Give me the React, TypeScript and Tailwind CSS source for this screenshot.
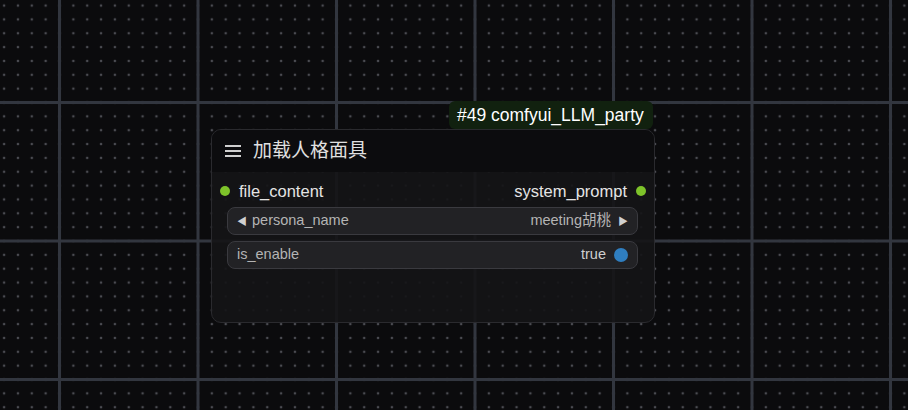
import type { ReactNode } from 'react'

const font = { fontFamily: '"Liberation Sans", Arial, "Noto Sans CJK SC", sans-serif' }

function CanvasGrid() {
  return (
    <svg className="absolute inset-0 h-full w-full" width="908" height="410">
      <defs>
        <pattern id="dots" patternUnits="userSpaceOnUse" width="13.85" height="13.85" x="59.5" y="102.5">
          <circle cx="0" cy="0" r="1.3" fill="#4b4c52" />
          <circle cx="13.85" cy="0" r="1.3" fill="#4b4c52" />
          <circle cx="0" cy="13.85" r="1.3" fill="#4b4c52" />
          <circle cx="13.85" cy="13.85" r="1.3" fill="#4b4c52" />
        </pattern>
        <pattern id="lines" patternUnits="userSpaceOnUse" width="138.5" height="138.5" x="58" y="101">
          <rect x="0" y="0" width="3" height="138.5" fill="#32363f" />
          <rect x="0" y="0" width="138.5" height="3" fill="#32363f" />
        </pattern>
      </defs>
      <rect width="908" height="410" fill="#0b0b0d" />
      <rect width="908" height="410" fill="url(#dots)" />
      <rect width="908" height="410" fill="url(#lines)" />
    </svg>
  )
}

function Slot({ label, side }: { label: string; side: 'in' | 'out' }) {
  return (
    <div className={`flex items-center gap-[9px] ${side === 'out' ? 'flex-row-reverse' : ''}`}>
      <span className="h-[10px] w-[10px] rounded-full bg-[#7ec32a]" />
      <span className="text-[16.5px] leading-5 text-[#e4e4e4]">{label}</span>
    </div>
  )
}

function Widget({ children }: { children: ReactNode }) {
  return (
    <div className="flex h-[28px] items-center justify-between rounded-[8px] border border-[#3a3a3f] bg-[#222225] px-[9px] text-[14.5px] text-[#b4b4b4]">
      {children}
    </div>
  )
}

export default function App() {
  return (
    <div className="relative h-[410px] w-[908px] overflow-hidden bg-[#0b0b0d]" style={font}>
      <CanvasGrid />

      <div className="absolute left-[449px] top-[101px] flex h-[28px] w-[204px] items-center rounded-[6px] bg-[#11210f] px-[8px] text-[17.5px] text-white">
        #49 comfyui_LLM_party
      </div>

      <div className="absolute left-[211px] top-[129px] flex h-[194px] w-[444px] flex-col overflow-hidden rounded-[10px] border border-[#2a2a2e] bg-[#141416]/90">
        <div className="flex h-[42px] items-center gap-[12px] bg-[#0c0c0e] pl-[13px]">
          <div className="flex w-[16px] flex-col gap-[3px]">
            <span className="h-[2px] w-full bg-[#cfcfcf]" />
            <span className="h-[2px] w-full bg-[#cfcfcf]" />
            <span className="h-[2px] w-full bg-[#cfcfcf]" />
          </div>
          <span className="text-[19px] text-[#e0e0e0]">加载人格面具</span>
        </div>

        <div className="mt-[9px] flex h-5 items-center justify-between px-[8px]">
          <Slot label="file_content" side="in" />
          <Slot label="system_prompt" side="out" />
        </div>

        <div className="mt-[6px] flex flex-col gap-[6px] pl-[15px] pr-[16px]">
          <Widget>
            <span className="flex items-center gap-[5px]">
              <span className="text-[10px] text-[#d0d0d0]">◀</span>
              <span>persona_name</span>
            </span>
            <span className="flex items-center gap-[7px]">
              <span>meeting胡桃</span>
              <span className="text-[10px] text-[#d0d0d0]">▶</span>
            </span>
          </Widget>
          <Widget>
            <span>is_enable</span>
            <span className="flex items-center gap-[8px] text-[#cfcfcf]">
              <span>true</span>
              <span className="h-[14px] w-[14px] rounded-full bg-[#2f7ec0]" />
            </span>
          </Widget>
        </div>
      </div>
    </div>
  )
}
